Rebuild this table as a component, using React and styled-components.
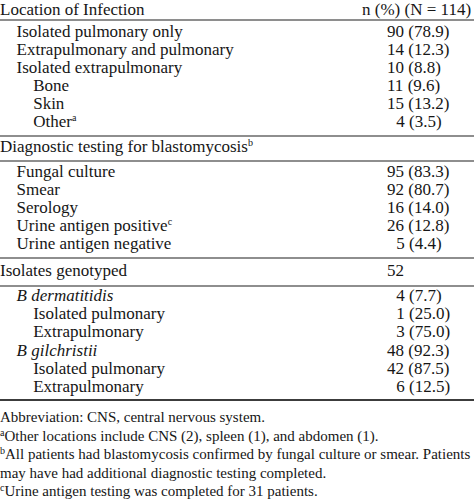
import React from "react";
import styled, { createGlobalStyle } from "styled-components";

const Global = createGlobalStyle`
  html, body { margin: 0; padding: 0; background: #ffffff; }
  body { overflow: hidden; width: 474px; height: 500px; }
  #root { width: 474px; }
`;

const Page = styled.div`
  width: 474px;
  font-family: "Liberation Serif", "Times New Roman", serif;
  color: #161616;
  overflow: hidden;
`;

const Section = styled.div`
  padding-top: ${(p) => p.$pt || 0}px;
  padding-bottom: ${(p) => p.$pb || 0}px;
  border-bottom: 2px solid ${(p) => (p.$dark ? "#3c3c3c" : "#8e8e8e")};
`;

const Row = styled.div`
  display: grid;
  grid-template-columns: ${(p) => p.$split || 387}px 1fr;
  font-size: 17px;
  line-height: ${(p) => p.$lh || 18}px;
  height: ${(p) => p.$lh || 18}px;
  white-space: nowrap;
`;

const Label = styled.div`
  padding-left: ${(p) => (p.$level || 0) * 16.6}px;
  font-style: ${(p) => (p.$italic ? "italic" : "normal")};
`;

const Value = styled.div`
  white-space: nowrap;
`;

const Pad = styled.span`
  display: inline-block;
  width: 0.55em;
`;

const Sup = styled.sup`
  font-size: 10px;
  line-height: 0;
  vertical-align: ${(p) => p.$raise || 6}px;
`;

const Notes = styled.div`
  margin-top: 7px;
  font-size: 15px;
  line-height: 18.5px;
  white-space: nowrap;
`;

const Note = styled.div``;

const V = ({ n, pct }) => (
  <Value>
    {String(n).length === 1 && <Pad />}
    {n}
    {pct !== undefined ? ` (${pct})` : ""}
  </Value>
);

const group1 = [
  { l: "Isolated pulmonary only", n: 90, p: "78.9", lv: 1 },
  { l: "Extrapulmonary and pulmonary", n: 14, p: "12.3", lv: 1 },
  { l: "Isolated extrapulmonary", n: 10, p: "8.8", lv: 1 },
  { l: "Bone", n: 11, p: "9.6", lv: 2 },
  { l: "Skin", n: 15, p: "13.2", lv: 2 },
  { l: "Other", n: 4, p: "3.5", lv: 2, sup: "a" },
];

const group2 = [
  { l: "Fungal culture", n: 95, p: "83.3", lv: 1 },
  { l: "Smear", n: 92, p: "80.7", lv: 1 },
  { l: "Serology", n: 16, p: "14.0", lv: 1 },
  { l: "Urine antigen positive", n: 26, p: "12.8", lv: 1, sup: "c" },
  { l: "Urine antigen negative", n: 5, p: "4.4", lv: 1 },
];

const group3 = [
  { l: "B dermatitidis", n: 4, p: "7.7", lv: 1, it: true },
  { l: "Isolated pulmonary", n: 1, p: "25.0", lv: 2 },
  { l: "Extrapulmonary", n: 3, p: "75.0", lv: 2 },
  { l: "B gilchristii", n: 48, p: "92.3", lv: 1, it: true },
  { l: "Isolated pulmonary", n: 42, p: "87.5", lv: 2 },
  { l: "Extrapulmonary", n: 6, p: "12.5", lv: 2 },
];

const Rows = ({ items, lh }) =>
  items.map((r, i) => (
    <Row key={i} $lh={lh}>
      <Label $level={r.lv} $italic={r.it}>
        {r.l}
        {r.sup && <Sup>{r.sup}</Sup>}
      </Label>
      <V n={r.n} pct={r.p} />
    </Row>
  ));

export default function App() {
  return (
    <>
      <Global />
      <Page>
        <Section $pb={0}>
          <Row $split={362} $lh={19}>
            <Label>Location of Infection</Label>
            <Value>n (%) (N = 114)</Value>
          </Row>
        </Section>
        <Section $pt={1.6} $pb={4.4}>
          <Rows items={group1} />
        </Section>
        <Section $pt={0.6} $pb={4.4}>
          <Row>
            <Label>
              Diagnostic testing for blastomycosis<Sup>b</Sup>
            </Label>
            <Value />
          </Row>
        </Section>
        <Section $pt={0.6} $pb={4.4}>
          <Rows items={group2} />
        </Section>
        <Section $pt={3} $pb={5}>
          <Row>
            <Label>Isolates genotyped</Label>
            <Value>52</Value>
          </Row>
        </Section>
        <Section $pt={0} $pb={3} $dark>
          <Rows items={group3} lh={18.2} />
        </Section>
        <Notes>
          <Note>Abbreviation: CNS, central nervous system.</Note>
          <Note>
            <Sup $raise={5}>a</Sup>Other locations include CNS (2), spleen (1), and abdomen (1).
          </Note>
          <Note>
            <Sup $raise={5}>b</Sup>All patients had blastomycosis confirmed by fungal culture or smear. Patients
          </Note>
          <Note>may have had additional diagnostic testing completed.</Note>
          <Note>
            <Sup $raise={5}>c</Sup>Urine antigen testing was completed for 31 patients.
          </Note>
        </Notes>
      </Page>
    </>
  );
}
